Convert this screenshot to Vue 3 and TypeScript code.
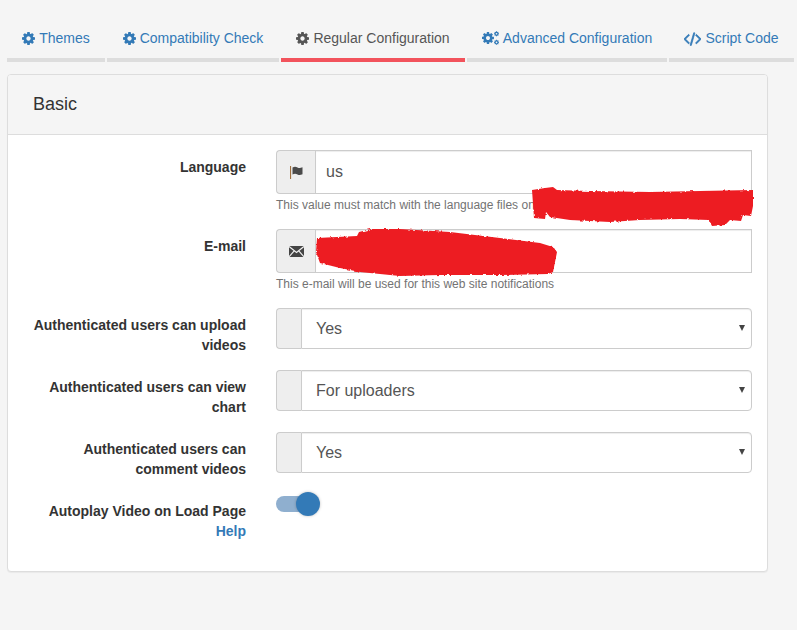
<script setup lang="ts">
const gear =
  'M1152 896q0-106-75-181t-181-75-181 75-75 181 75 181 181 75 181-75 75-181zm512-109v222q0 12-8 23t-20 13l-185 28q-19 54-39 91 35 50 107 138 10 12 10 25t-9 23q-27 37-99 108t-94 71q-12 0-26-9l-138-108q-44 23-91 38-16 136-29 186-7 28-36 28h-222q-14 0-24.500-8.500t-11.500-21.500l-28-184q-49-16-90-37l-141 107q-10 9-25 9-14 0-25-11-126-114-165-168-7-10-7-23 0-12 8-23 15-21 51-66.500t54-70.500q-27-50-41-99l-183-27q-13-2-21-12.500t-8-23.500v-222q0-12 8-23t19-13l186-28q14-46 39-92-40-57-107-138-10-12-10-24 0-10 9-23 26-36 98.500-107.500t94.500-71.500q13 0 26 10l138 107q44-23 91-38 16-136 29-186 7-28 36-28h222q14 0 24.500 8.500t11.500 21.500l28 184q49 16 90 37l142-107q9-9 24-9 13 0 25 10 129 119 165 170 7 8 7 22 0 12-8 23-15 21-51 66.500t-54 70.500q26 50 41 98l183 28q13 2 21 12.500t8 23.500z'
const code =
  'M553 1399l-50 50q-10 10-23 10t-23-10l-466-466q-10-10-10-23t10-23l466-466q10-10 23-10t23 10l50 50q10 10 10 23t-10 23l-393 393 393 393q10 10 10 23t-10 23zm591-1067l-373 1291q-4 13-15.500 19.500t-23.500 2.500l-62-17q-13-4-19.500-15.500t-2.500-24.500l373-1291q4-13 15.500-19.500t23.500-2.500l62 17q13 4 19.500 15.500t2.500 24.500zm657 651l-466 466q-10 10-23 10t-23-10l-50-50q-10-10-10-23t10-23l393-393-393-393q-10-10-10-23t10-23l50-50q10-10 23-10t23 10l466 466q10 10 10 23t-10 23z'

const tabs = [
  { label: 'Themes', icon: 'cog', active: false },
  { label: 'Compatibility Check', icon: 'cog', active: false },
  { label: 'Regular Configuration', icon: 'cog', active: true },
  { label: 'Advanced Configuration', icon: 'cogs', active: false },
  { label: 'Script Code', icon: 'code', active: false },
]

const selects = [
  { label: 'Authenticated users can upload videos', value: 'Yes', options: ['Yes', 'No'] },
  { label: 'Authenticated users can view chart', value: 'For uploaders', options: ['For uploaders', 'Yes', 'No'] },
  { label: 'Authenticated users can comment videos', value: 'Yes', options: ['Yes', 'No'] },
]
</script>

<template>
  <div class="page">
    <nav class="tabs">
      <a v-for="t in tabs" :key="t.label" class="tab" :class="{ active: t.active }">
        <svg v-if="t.icon === 'cog'" class="ico cog" viewBox="128 128 1536 1536"><path :d="gear" /></svg>
        <svg v-else-if="t.icon === 'cogs'" class="ico cogs" viewBox="0 0 1920 1536">
          <path :d="gear" transform="translate(-113 -22) scale(0.88)" />
          <path :d="gear" transform="translate(1308 -47) scale(0.37)" />
          <path :d="gear" transform="translate(1308 924) scale(0.37)" />
        </svg>
        <svg v-else class="ico code" viewBox="0 100 1792 1592"><path :d="code" stroke="currentColor" stroke-width="80" /></svg>
        <span>{{ t.label }}</span>
      </a>
    </nav>

    <section class="panel">
      <header class="panel-head">Basic</header>
      <div class="panel-body">
        <div class="row">
          <label class="lbl">Language</label>
          <div class="ctl">
            <div class="group tall">
              <span class="addon wide">
                <svg class="glyph" viewBox="0 0 13 13">
                  <rect x="0" y="0" width="1.1" height="13" fill="#a0703f" />
                  <path d="M2.500 1.500c2-1 3.500-.8 5 0s3 .6 5-.2v6.900c-2 .9-3.500 1-5 .2s-3-1-5 0z" fill="#4a4a4a" />
                </svg>
              </span>
              <input class="field" type="text" value="us" />
            </div>
            <p class="help">This value must match with the language files on</p>
          </div>
        </div>

        <div class="row">
          <label class="lbl">E-mail</label>
          <div class="ctl">
            <div class="group tall">
              <span class="addon wide">
                <svg class="glyph env" viewBox="0 0 15 11">
                  <rect width="15" height="11" fill="#444" />
                  <path d="M0 .4 7.500 6.500 15 .4M0 10.800 5.200 4.800M15 10.800 9.800 4.800" fill="none" stroke="#eee" stroke-width="1.200" />
                </svg>
              </span>
              <input class="field" type="text" value="" />
            </div>
            <p class="help">This e-mail will be used for this web site notifications</p>
          </div>
        </div>

        <div v-for="s in selects" :key="s.label" class="row">
          <label class="lbl">{{ s.label }}</label>
          <div class="ctl">
            <div class="group">
              <span class="addon narrow"></span>
              <div class="select-wrap">
                <select class="select">
                  <option v-for="o in s.options" :key="o" :selected="o === s.value">{{ o }}</option>
                </select>
              </div>
            </div>
          </div>
        </div>

        <div class="row">
          <label class="lbl">Autoplay Video on Load Page<br /><a class="help-link">Help</a></label>
          <div class="ctl">
            <div class="switch"><span class="knob"></span></div>
          </div>
        </div>
      </div>
    </section>

    <svg class="scribble" width="797" height="630" viewBox="0 0 797 630" aria-hidden="true">
      <defs>
        <filter id="rough" x="-5%" y="-20%" width="110%" height="140%">
          <feTurbulence type="fractalNoise" baseFrequency="0.3" numOctaves="2" seed="4" />
          <feDisplacementMap in="SourceGraphic" scale="3" />
          <feGaussianBlur stdDeviation="0.6" />
        </filter>
      </defs>
      <g fill="#ed1c24" filter="url(#rough)">
        <path d="M532 190 545 188 553 187 557 190 590 191 650 192 700 191 753 190 753 206 751 216 743 215 741 221 730 220 725 225 712 226 709 220 680 219 640 220 610 222 590 221 570 220 550 217 546 212 545 219 534 218z" />
        <path d="M317 238 357 236 359 232 371 229 400 229 450 232 500 238 540 243 553 247 557 252 553 272 548 274 500 275 440 275 400 276 360 272 340 268 320 263 316 252z" />
      </g>
    </svg>
  </div>
</template>

<style>
html,
body {
  margin: 0;
  background: #f5f5f5;
}
</style>

<style scoped>
.page {
  position: relative;
  box-sizing: border-box;
  width: 797px;
  height: 630px;
  padding: 28px 3px 0 7px;
  overflow: hidden;
  background: #f5f5f5;
  color: #333;
  font-family: "Liberation Sans", Arial, sans-serif;
  font-size: 14px;
  line-height: 20px;
}
.tabs {
  display: grid;
  grid-template-columns: 98px 172px 184px 200px 125px;
  column-gap: 2px;
}
.tab {
  display: flex;
  align-items: center;
  justify-content: center;
  gap: 4px;
  padding-bottom: 10px;
  border-bottom: 4px solid #ddd;
  color: #337ab7;
}
.tab.active {
  border-bottom-color: #f2535c;
  color: #555;
}
.ico {
  display: block;
  fill: currentColor;
  flex: none;
}
.cog {
  width: 13px;
  height: 13px;
}
.cogs {
  width: 17px;
  height: 14px;
}
.code {
  width: 17px;
  height: 15px;
}
.panel {
  box-sizing: border-box;
  width: 761px;
  height: 498px;
  margin-top: 12px;
  background: #fff;
  border: 1px solid #ddd;
  border-radius: 4px;
  box-shadow: 0 1px 1px rgba(0, 0, 0, 0.05);
  overflow: hidden;
}
.panel-head {
  box-sizing: border-box;
  height: 60px;
  padding: 19px 25px 0;
  background: #f5f5f5;
  border-bottom: 1px solid #ddd;
  font-size: 18px;
}
.panel-body {
  padding: 15px;
}
.row {
  display: grid;
  grid-template-columns: 223px 476px;
  column-gap: 30px;
  margin-bottom: 15px;
}
.row:last-child {
  margin-bottom: 0;
}
.lbl {
  padding-top: 7px;
  font-weight: 700;
  text-align: right;
}
.help-link {
  color: #337ab7;
}
.group {
  display: flex;
  height: 41px;
}
.group.tall {
  height: 44px;
}
.addon {
  box-sizing: border-box;
  display: flex;
  align-items: center;
  justify-content: center;
  flex: none;
  background: #eee;
  border: 1px solid #ccc;
  border-right: 0;
  border-radius: 4px 0 0 4px;
}
.addon.wide {
  width: 39px;
}
.addon.narrow {
  width: 25px;
}
.glyph {
  display: block;
  width: 13px;
  height: 13px;
}
.glyph.env {
  width: 15px;
  height: 11px;
}
.field {
  box-sizing: border-box;
  flex: 1;
  min-width: 0;
  height: 100%;
  margin: 0;
  padding: 0 10px;
  background: #fff;
  border: 1px solid #ccc;
  border-radius: 0;
  box-shadow: inset 0 1px 1px rgba(0, 0, 0, 0.075);
  color: #555;
  font: 16px "Liberation Sans", Arial, sans-serif;
  outline: none;
}
.help {
  margin: 3px 0 0;
  color: #737373;
  font-size: 12px;
  line-height: 17px;
  white-space: nowrap;
}
.select-wrap {
  position: relative;
  flex: 1;
  min-width: 0;
}
.select-wrap::after {
  content: "";
  position: absolute;
  top: 17px;
  right: 7px;
  width: 0;
  height: 0;
  border-left: 3px solid transparent;
  border-right: 3px solid transparent;
  border-top: 6px solid #444;
  pointer-events: none;
}
.select {
  box-sizing: border-box;
  display: block;
  width: 100%;
  height: 100%;
  margin: 0;
  padding: 0 14px;
  appearance: none;
  background: #fff;
  border: 1px solid #ccc;
  border-radius: 0 4px 4px 0;
  box-shadow: inset 0 1px 1px rgba(0, 0, 0, 0.075);
  color: #555;
  font: 16px "Liberation Sans", Arial, sans-serif;
  outline: none;
}
.switch {
  position: relative;
  width: 40px;
  height: 16px;
  margin-top: 2px;
  border-radius: 8px;
  background: #8fafcf;
}
.knob {
  position: absolute;
  top: -4px;
  left: 20px;
  width: 24px;
  height: 24px;
  border-radius: 50%;
  background: #337ab7;
  box-shadow: 0 0 3px rgba(0, 0, 0, 0.25);
}
.scribble {
  position: absolute;
  top: 0;
  left: 0;
  pointer-events: none;
}
</style>
